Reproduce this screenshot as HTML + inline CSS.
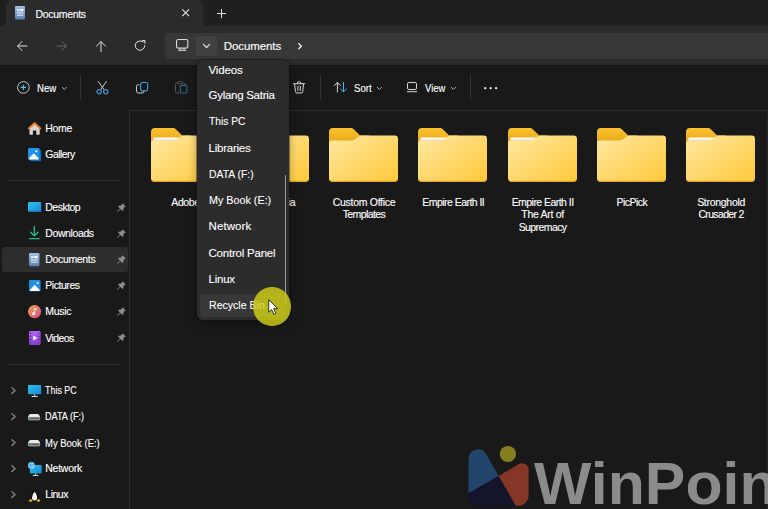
<!DOCTYPE html>
<html lang="en">
<head>
<meta charset="utf-8">
<title>Documents</title>
<style>
*{box-sizing:border-box;margin:0;padding:0}
html,body{width:768px;height:509px;overflow:hidden;background:#191919}
body{position:relative;font-family:"Liberation Sans",sans-serif;color:#fff;font-size:9.85px}
.abs{position:absolute}
svg{position:absolute;overflow:visible}
#titlebar{left:0;top:0;width:768px;height:27px;background:#1f1f1f}
#tab{left:6px;top:0;width:197px;height:27px;background:#2b2b2b;border-radius:6px 6px 0 0}
#navbar{left:0;top:26px;width:768px;height:39px;background:#2b2b2b}
#addr{left:165px;top:32.600px;width:620px;height:26px;background:#373737;border-radius:4px}
#chevbtn{left:196px;top:36px;width:20.5px;height:20px;background:#414141;border-radius:4px}
#toolbar{left:0;top:65px;width:768px;height:45.800px;background:#191919;border-top:1px solid #161616;border-bottom:1.400px solid #2d2d2d}
.t{position:absolute;white-space:nowrap;line-height:14px;color:#fff;font-size:10.500px;-webkit-text-stroke:.12px #fff}
.sep{position:absolute;width:1px;background:#333}
#sidebar{left:0;top:110px;width:130px;height:399px;background:#191919;border-right:1px solid #2b2b2b}
#sel{left:2px;top:246.5px;width:125.500px;height:25.500px;background:#2d2d2d;border-radius:3px}
#menu{left:197px;top:60px;width:92px;height:260px;background:#2c2c2c;border-radius:6px;box-shadow:0 0 0 1px rgba(16,16,16,.4),0 4px 10px rgba(0,0,0,.35)}
#menu .hl{left:3px;top:234px;width:85px;height:23px;background:#383838;border-radius:3px}
#menu .sb{left:87.500px;top:115px;width:1.500px;height:129px;background:#9c9c9c;border-radius:1px}
.mi{position:absolute;left:11.500px;font-size:11.500px;color:#fff;white-space:nowrap;line-height:14px;-webkit-text-stroke:.1px #fff}
.lbl{position:absolute;width:88px;text-align:center;font-size:10.500px;line-height:12.500px;color:#fff;-webkit-text-stroke:.12px #fff}
#wm{left:534.200px;top:451.150px;font-weight:bold;font-size:59.600px;line-height:66px;color:#8b8b8b;white-space:nowrap;transform-origin:0 0;transform:scaleX(1.02)}
#halo{left:252.600px;top:287.300px;width:38.800px;height:39.200px;border-radius:50%;background:rgba(209,207,22,.82)}
</style>
</head>
<body>
<svg width="0" height="0"><defs>
<linearGradient id="fb" x1="0" y1="0" x2="0" y2="1"><stop offset="0" stop-color="#fcc12e"/><stop offset=".45" stop-color="#e9ab1d"/></linearGradient>
<linearGradient id="ff" x1="0" y1="0" x2="1" y2="1"><stop offset="0" stop-color="#ffe9a4"/><stop offset="1" stop-color="#ffc838"/></linearGradient>
<linearGradient id="pg" x1="0" y1="0" x2="0" y2="1"><stop offset="0" stop-color="#ffffff"/><stop offset="1" stop-color="#e4e4e4"/></linearGradient>
<linearGradient id="cy" x1="0" y1="0" x2="1" y2="1"><stop offset="0" stop-color="#2fc3ea"/><stop offset="1" stop-color="#1887d6"/></linearGradient>
<linearGradient id="dc" x1="0" y1="0" x2="0" y2="1"><stop offset="0" stop-color="#a5c0e4"/><stop offset="1" stop-color="#587fb2"/></linearGradient>
<linearGradient id="mu" x1="0" y1="0" x2="1" y2="1"><stop offset="0" stop-color="#f4a94a"/><stop offset="1" stop-color="#d5488e"/></linearGradient>
<linearGradient id="vd" x1="0" y1="0" x2="0" y2="1"><stop offset="0" stop-color="#b062f0"/><stop offset="1" stop-color="#8a3fd6"/></linearGradient>
</defs></svg>

<div id="titlebar" class="abs"></div>
<div id="tab" class="abs"></div>
<!-- tab inverse corners -->
<svg style="left:0;top:21px" width="6" height="6" viewBox="0 0 6 6"><path d="M6 0 V6 H0 A6 6 0 0 0 6 0 Z" fill="#2b2b2b"/></svg>
<svg style="left:203px;top:21px" width="6" height="6" viewBox="0 0 6 6"><path d="M0 0 V6 H6 A6 6 0 0 1 0 0 Z" fill="#2b2b2b"/></svg>
<div id="navbar" class="abs"></div>
<div id="addr" class="abs"></div>
<div id="chevbtn" class="abs"></div>
<div id="toolbar" class="abs"></div>
<div id="sidebar" class="abs"></div>
<div id="sel" class="abs"></div>

<!-- tab content -->
<svg style="left:15.400px;top:6.200px" width="10" height="13.400" viewBox="0 0 10 13.400"><rect width="10" height="13.400" rx="1" fill="url(#dc)"/><rect x="2" y="3" width="2.600" height="2.200" fill="#dfe9f6"/><rect x="5.400" y="3" width="2.800" height="2.200" fill="#fff"/><rect x="2" y="6.500" width="6.200" height="1" fill="#e6eef9"/><rect x="2" y="8.700" width="6.200" height="1" fill="#e6eef9"/></svg>
<div class="t" style="left:35.500px;top:6.500px;letter-spacing:-0.322px">Documents</div>
<svg style="left:182px;top:9.400px" width="7.400" height="7.400" viewBox="0 0 7.400 7.400"><path d="M.3 .3 L7.100 7.100 M7.100 .3 L.3 7.100" stroke="#e6e6e6" stroke-width="1.100" fill="none"/></svg>
<svg style="left:217px;top:9px" width="9" height="9" viewBox="0 0 9 9"><path d="M4.500 0 V9 M0 4.500 H9" stroke="#e0e0e0" stroke-width="1" fill="none"/></svg>

<!-- nav icons -->
<svg style="left:17px;top:40.500px" width="10" height="10" viewBox="0 0 10 10"><path d="M10 5 H.8 M5 .6 L.6 5 L5 9.400" stroke="#e0e0e0" stroke-width="1" fill="none" stroke-linecap="round" stroke-linejoin="round"/></svg>
<svg style="left:56.500px;top:40.500px" width="10" height="10" viewBox="0 0 10 10"><path d="M0 5 H9.200 M5 .6 L9.400 5 L5 9.400" stroke="#6a6a6a" stroke-width="1" fill="none" stroke-linecap="round" stroke-linejoin="round"/></svg>
<svg style="left:95.500px;top:40.800px" width="10" height="10.500" viewBox="0 0 10 10.500"><path d="M5 10.500 V.8 M.6 5 L5 .6 L9.400 5" stroke="#e0e0e0" stroke-width="1" fill="none" stroke-linecap="round" stroke-linejoin="round"/></svg>
<svg style="left:134.800px;top:40.200px" width="10.500" height="10.500" viewBox="0 0 10.500 10.500"><path d="M9.680 5.600 A4.700 4.700 0 1 1 7.900 1.900" stroke="#e0e0e0" stroke-width="1" fill="none" stroke-linecap="round"/><path d="M7.300 .6 H10 V3.300" stroke="#e0e0e0" stroke-width="1" fill="none" stroke-linecap="round" stroke-linejoin="round"/><path d="M8.300 1.100 H9.600 V2.400 Z" fill="#e0e0e0"/></svg>
<!-- monitor -->
<svg style="left:176px;top:39.300px" width="12.400" height="12" viewBox="0 0 12.400 12"><rect x=".55" y=".55" width="11.300" height="8.600" rx="1.600" stroke="#d8d8d8" stroke-width="1.100" fill="none"/><path d="M2.200 11.300 H10.200" stroke="#d8d8d8" stroke-width="1.100"/><path d="M4.300 9.300 V11 M8.100 9.300 V11" stroke="#d8d8d8" stroke-width=".9"/></svg>
<svg style="left:202.800px;top:44px" width="7" height="4" viewBox="0 0 7 4"><path d="M.4 .4 L3.500 3.500 L6.600 .4" stroke="#e8e8e8" stroke-width="1.100" fill="none" stroke-linecap="round" stroke-linejoin="round"/></svg>
<div class="t" style="left:223.700px;top:38.500px;font-size:11.500px;letter-spacing:-.08px">Documents</div>
<svg style="left:297.900px;top:42.800px" width="4.200" height="6.400" viewBox="0 0 4.200 6.400"><path d="M.7 .6 L3.400 3.200 L.7 5.800" stroke="#ececec" stroke-width="1.350" fill="none" stroke-linecap="round" stroke-linejoin="round"/></svg>

<!-- toolbar -->
<svg style="left:16.900px;top:80.800px" width="12.800" height="12.800" viewBox="0 0 12.800 12.800"><circle cx="6.400" cy="6.400" r="5.850" stroke="#c8c8c8" stroke-width="1" fill="none"/><path d="M6.400 4.100 V8.700 M4.100 6.400 H8.700" stroke="#4cc2ff" stroke-width="1.100" stroke-linecap="round"/></svg>
<div class="t" style="left:36.800px;top:81px;transform-origin:0 0;transform:scaleX(0.914)">New</div>
<svg style="left:61.700px;top:86.500px" width="4.800" height="2.800" viewBox="0 0 4.800 2.800"><path d="M.3 .3 L2.400 2.400 L4.500 .3" stroke="#bdbdbd" stroke-width=".9" fill="none" stroke-linecap="round" stroke-linejoin="round"/></svg>
<div class="sep" style="left:80px;top:74.500px;height:25.500px"></div>
<!-- scissors -->
<svg style="left:96px;top:80.800px" width="12" height="13.400" viewBox="0 0 12 13.400"><path d="M2.300 .5 L7.950 8.500 M10.400 .5 L4.750 8.500" stroke="#d0d0d0" stroke-width="1" fill="none" stroke-linecap="round"/><circle cx="3.100" cy="10.700" r="2.150" stroke="#3d9fd8" stroke-width="1.150" fill="none"/><circle cx="9.800" cy="10.700" r="2.150" stroke="#3d9fd8" stroke-width="1.150" fill="none"/></svg>
<!-- copy -->
<svg style="left:135.600px;top:81.700px" width="12.400" height="11.500" viewBox="0 0 12.400 11.500"><path d="M3.300 2.800 H2.300 a1.800 1.800 0 0 0 -1.800 1.800 V9.200 a1.800 1.800 0 0 0 1.800 1.800 H6.200 a1.800 1.800 0 0 0 1.800 -1.800" stroke="#cfcfcf" stroke-width="1" fill="none"/><rect x="4.700" y=".5" width="7" height="8.400" rx="1.800" stroke="#3fa8e0" stroke-width="1.100" fill="none"/></svg>
<!-- paste (disabled) -->
<svg style="left:174.700px;top:81.300px" width="12.400" height="12.500" viewBox="0 0 12.400 12.500"><path d="M3 1.800 H2 a1.500 1.500 0 0 0 -1.500 1.500 V10.500 a1.500 1.500 0 0 0 1.500 1.500 H4.500 M7.500 1.800 H8.500 a1.500 1.500 0 0 1 1.500 1.500 V4" stroke="#555" stroke-width="1" fill="none"/><rect x="3" y=".5" width="4.500" height="2.400" rx="1" stroke="#555" stroke-width=".9" fill="none"/><rect x="5.400" y="4.400" width="6.500" height="7.600" rx="1.300" stroke="#2a678a" stroke-width="1.100" fill="none"/></svg>
<!-- trash -->
<svg style="left:292.800px;top:81.300px" width="12.200" height="12.500" viewBox="0 0 12.200 12.500"><path d="M.4 2.700 H11.800 M4.200 2.500 a1.900 1.900 0 0 1 3.800 0" stroke="#d8d8d8" stroke-width="1" fill="none" stroke-linecap="round"/><path d="M1.600 2.900 L2.500 10.600 a1.500 1.500 0 0 0 1.500 1.400 H8.200 a1.500 1.500 0 0 0 1.500 -1.400 L10.600 2.900" stroke="#d8d8d8" stroke-width="1" fill="none"/><path d="M4.900 5.200 V9.400 M7.300 5.200 V9.400" stroke="#d8d8d8" stroke-width="1" stroke-linecap="round"/></svg>
<div class="sep" style="left:320px;top:74.500px;height:25.500px"></div>
<!-- sort -->
<svg style="left:334px;top:81.900px" width="13" height="10.400" viewBox="0 0 13 10.400"><path d="M3.400 10 V.7 M.5 3.500 L3.400 .5 L6.300 3.500" stroke="#d8d8d8" stroke-width="1" fill="none" stroke-linecap="round" stroke-linejoin="round"/><path d="M9.500 .4 V9.700 M6.600 6.900 L9.500 9.900 L12.400 6.900" stroke="#4cb8f0" stroke-width="1" fill="none" stroke-linecap="round" stroke-linejoin="round"/></svg>
<div class="t" style="left:353.500px;top:81px;transform-origin:0 0;transform:scaleX(0.917)">Sort</div>
<svg style="left:376.900px;top:86.500px" width="4.800" height="2.800" viewBox="0 0 4.800 2.800"><path d="M.3 .3 L2.400 2.400 L4.500 .3" stroke="#bdbdbd" stroke-width=".9" fill="none" stroke-linecap="round" stroke-linejoin="round"/></svg>
<!-- view -->
<svg style="left:406.900px;top:82.400px" width="10" height="10.400" viewBox="0 0 10 10.400"><rect x=".5" y=".5" width="9" height="7" rx="1.300" stroke="#d8d8d8" stroke-width="1" fill="none"/><path d="M.3 9.700 H9.700" stroke="#d8d8d8" stroke-width="1" stroke-linecap="round"/></svg>
<div class="t" style="left:425px;top:81px;transform-origin:0 0;transform:scaleX(0.899)">View</div>
<svg style="left:451.200px;top:86.500px" width="4.800" height="2.800" viewBox="0 0 4.800 2.800"><path d="M.3 .3 L2.400 2.400 L4.500 .3" stroke="#bdbdbd" stroke-width=".9" fill="none" stroke-linecap="round" stroke-linejoin="round"/></svg>
<div class="sep" style="left:470px;top:74.500px;height:25.500px"></div>
<svg style="left:483.700px;top:87.100px" width="13.400" height="2.400" viewBox="0 0 13.400 2.400"><circle cx="1.200" cy="1.200" r="1.150" fill="#f0f0f0"/><circle cx="6.700" cy="1.200" r="1.150" fill="#f0f0f0"/><circle cx="12.200" cy="1.200" r="1.150" fill="#f0f0f0"/></svg>

<!-- sidebar icons + text -->
<!-- home -->
<svg style="left:27.800px;top:122.300px" width="13.200" height="12.800" viewBox="0 0 13.200 12.800"><path d="M1.500 6.400 L6.600 1.800 L11.700 6.400 V11.900 a.8 .8 0 0 1 -.8 .8 H8.300 V8.600 H4.900 V12.700 H2.300 a.8 .8 0 0 1 -.8 -.8 Z" fill="#d6d6d6"/><path d="M.9 6.500 L6.600 1.200 L12.300 6.500" stroke="#f0862c" stroke-width="1.900" fill="none" stroke-linecap="round" stroke-linejoin="round"/></svg>
<div class="t" style="left:45.300px;top:120.5px;letter-spacing:-0.302px">Home</div>
<!-- gallery -->
<svg style="left:28px;top:148px" width="13.200" height="13.200" viewBox="0 0 13.200 13.200"><rect x="1.800" y="1.800" width="11.400" height="11.400" rx="1.500" fill="#1565b8"/><rect width="11.600" height="11.600" rx="1.500" fill="#2094e6"/><path d="M.6 10.800 L5 5.900 a1 1 0 0 1 1.400 0 L11 10.800 a.9 .9 0 0 1 -.7 .8 H1.300 a.9 .9 0 0 1 -.7 -.8 Z" fill="#fff"/><circle cx="8.300" cy="3.300" r="1" fill="#fff"/></svg>
<div class="t" style="left:45.300px;top:146.5px;letter-spacing:-0.551px">Gallery</div>
<div class="sep" style="left:8px;top:180px;width:113px;height:1px;background:#2f2f2f"></div>
<!-- desktop -->
<svg style="left:27.800px;top:202px" width="13.200" height="10" viewBox="0 0 13.200 10"><rect width="13.200" height="10" rx="1.400" fill="url(#cy)"/><rect x="0" y="8.800" width="13.200" height="1.200" rx=".6" fill="#1672c0"/></svg>
<div class="t" style="left:45.300px;top:199.5px;letter-spacing:-0.517px">Desktop</div>
<!-- downloads -->
<svg style="left:29px;top:226.300px" width="10.600" height="13.400" viewBox="0 0 10.600 13.400"><path d="M5.300 .5 V9.600 M1.600 6.200 L5.300 9.900 L9 6.200 M.6 12.700 H10" stroke="#22c08e" stroke-width="1.300" fill="none" stroke-linecap="round" stroke-linejoin="round"/></svg>
<div class="t" style="left:45.300px;top:225.5px;letter-spacing:-0.394px">Downloads</div>
<!-- documents -->
<svg style="left:28.800px;top:252.800px" width="10.500" height="13.200" viewBox="0 0 10.500 13.200"><rect width="10.500" height="13.200" rx="1.100" fill="url(#dc)"/><rect x="2" y="3" width="2.700" height="2.200" fill="#dfe9f6"/><rect x="5.500" y="3" width="3" height="2.200" fill="#fff"/><rect x="2" y="6.500" width="6.500" height="1" fill="#e6eef9"/><rect x="2" y="8.700" width="6.500" height="1" fill="#e6eef9"/></svg>
<div class="t" style="left:45.300px;top:251.5px;letter-spacing:-0.345px">Documents</div>
<!-- pictures -->
<svg style="left:28.700px;top:280px" width="11.600" height="11.300" viewBox="0 0 11.600 11.300"><rect width="11.600" height="11.300" rx="1.400" fill="#1f8fe2"/><path d="M.7 10.200 L5 5.600 a1 1 0 0 1 1.500 0 L10.900 10.200 a.9 .9 0 0 1 -.7 .7 H1.400 a.9 .9 0 0 1 -.7 -.7 Z" fill="#fff"/><circle cx="8.600" cy="2.900" r="1" fill="#fff"/></svg>
<div class="t" style="left:45.300px;top:277.5px;letter-spacing:-0.453px">Pictures</div>
<!-- music -->
<svg style="left:27.800px;top:305.400px" width="13.200" height="13.200" viewBox="0 0 13.200 13.200"><circle cx="6.600" cy="6.600" r="6.600" fill="url(#mu)"/><path d="M6.300 3 L8.800 3.700 V5 L7.100 4.600 V8.800 a1.500 1.400 0 1 1 -.8 -1.250 Z" fill="#fff"/></svg>
<div class="t" style="left:45.300px;top:303.5px;letter-spacing:-0.284px">Music</div>
<!-- videos -->
<svg style="left:28.700px;top:331px" width="11.600" height="14" viewBox="0 0 11.600 14"><rect width="11.600" height="14" rx="1.400" fill="url(#vd)"/><g fill="#5a2496"><rect x="1" y="1.600" width="1.200" height="1.300"/><rect x="1" y="4.800" width="1.200" height="1.300"/><rect x="1" y="8" width="1.200" height="1.300"/><rect x="1" y="11.200" width="1.200" height="1.300"/><rect x="9.400" y="1.600" width="1.200" height="1.300"/><rect x="9.400" y="4.800" width="1.200" height="1.300"/><rect x="9.400" y="8" width="1.200" height="1.300"/><rect x="9.400" y="11.200" width="1.200" height="1.300"/></g><path d="M4.200 4.500 L8.300 7 L4.200 9.500 Z" fill="#fff"/></svg>
<div class="t" style="left:45.300px;top:330.5px;letter-spacing:-0.602px">Videos</div>
<!-- pins -->
<svg style="left:116.600px;top:202.800px" width="9" height="9" viewBox="0 0 9 9"><path d="M5.600 .3 L8.700 3.400 L7.700 3.900 L6.500 5.100 L6.300 7.200 L5.500 8 L3.500 6 L.8 8.700 L.3 8.700 L.3 8.200 L3 5.500 L1 3.500 L1.800 2.700 L3.900 2.500 L5.100 1.300 Z" fill="#8d8d8d"/></svg>
<svg style="left:116.600px;top:228.800px" width="9" height="9" viewBox="0 0 9 9"><path d="M5.600 .3 L8.700 3.400 L7.700 3.900 L6.500 5.100 L6.300 7.200 L5.500 8 L3.500 6 L.8 8.700 L.3 8.700 L.3 8.200 L3 5.500 L1 3.500 L1.800 2.700 L3.900 2.500 L5.100 1.300 Z" fill="#8d8d8d"/></svg>
<svg style="left:116.600px;top:254.800px" width="9" height="9" viewBox="0 0 9 9"><path d="M5.600 .3 L8.700 3.400 L7.700 3.900 L6.500 5.100 L6.300 7.200 L5.500 8 L3.500 6 L.8 8.700 L.3 8.700 L.3 8.200 L3 5.500 L1 3.500 L1.800 2.700 L3.900 2.500 L5.100 1.300 Z" fill="#8d8d8d"/></svg>
<svg style="left:116.600px;top:280.800px" width="9" height="9" viewBox="0 0 9 9"><path d="M5.600 .3 L8.700 3.400 L7.700 3.900 L6.500 5.100 L6.300 7.200 L5.500 8 L3.500 6 L.8 8.700 L.3 8.700 L.3 8.200 L3 5.500 L1 3.500 L1.800 2.700 L3.900 2.500 L5.100 1.300 Z" fill="#8d8d8d"/></svg>
<svg style="left:116.600px;top:306.800px" width="9" height="9" viewBox="0 0 9 9"><path d="M5.600 .3 L8.700 3.400 L7.700 3.900 L6.500 5.100 L6.300 7.200 L5.500 8 L3.500 6 L.8 8.700 L.3 8.700 L.3 8.200 L3 5.500 L1 3.500 L1.800 2.700 L3.900 2.500 L5.100 1.300 Z" fill="#8d8d8d"/></svg>
<svg style="left:116.600px;top:332.800px" width="9" height="9" viewBox="0 0 9 9"><path d="M5.600 .3 L8.700 3.400 L7.700 3.900 L6.500 5.100 L6.300 7.200 L5.500 8 L3.500 6 L.8 8.700 L.3 8.700 L.3 8.200 L3 5.500 L1 3.500 L1.800 2.700 L3.900 2.500 L5.100 1.300 Z" fill="#8d8d8d"/></svg>
<div class="sep" style="left:8px;top:364px;width:113px;height:1px;background:#2f2f2f"></div>
<!-- expanders -->
<svg style="left:10.900px;top:387.0px" width="5" height="7.200" viewBox="0 0 5 7.200"><path d="M.9 .8 L4.100 3.600 L.9 6.400" stroke="#7c7c7c" stroke-width="1.500" fill="none" stroke-linecap="round" stroke-linejoin="round"/></svg>
<svg style="left:10.900px;top:413.0px" width="5" height="7.200" viewBox="0 0 5 7.200"><path d="M.9 .8 L4.100 3.600 L.9 6.400" stroke="#7c7c7c" stroke-width="1.500" fill="none" stroke-linecap="round" stroke-linejoin="round"/></svg>
<svg style="left:10.900px;top:439.0px" width="5" height="7.200" viewBox="0 0 5 7.200"><path d="M.9 .8 L4.100 3.600 L.9 6.400" stroke="#7c7c7c" stroke-width="1.500" fill="none" stroke-linecap="round" stroke-linejoin="round"/></svg>
<svg style="left:10.900px;top:465.0px" width="5" height="7.200" viewBox="0 0 5 7.200"><path d="M.9 .8 L4.100 3.600 L.9 6.400" stroke="#7c7c7c" stroke-width="1.500" fill="none" stroke-linecap="round" stroke-linejoin="round"/></svg>
<svg style="left:10.900px;top:491.0px" width="5" height="7.200" viewBox="0 0 5 7.200"><path d="M.9 .8 L4.100 3.600 L.9 6.400" stroke="#7c7c7c" stroke-width="1.500" fill="none" stroke-linecap="round" stroke-linejoin="round"/></svg>
<!-- this pc -->
<svg style="left:27.800px;top:384.700px" width="13.200" height="12.200" viewBox="0 0 13.200 12.200"><rect width="13.200" height="9.200" rx="1" fill="url(#cy)"/><path d="M6.600 9.200 V11.300" stroke="#c4c4c4" stroke-width="1.100"/><rect x="3.400" y="11" width="6.400" height="1" rx=".5" fill="#d8d8d8"/></svg>
<div class="t" style="left:45.300px;top:382.5px;transform-origin:0 0;transform:scaleX(0.849)">This PC</div>
<!-- drives -->
<svg style="left:28.300px;top:414px" width="12.100" height="6.100" viewBox="0 0 12.100 6.100"><path d="M2.600 0 H9.500 C10.600 0 11.600 1.400 12.100 3 H0 C.5 1.400 1.500 0 2.600 0 Z" fill="#ececec"/><rect x=".35" y="3" width="11.400" height="2.900" rx=".8" fill="#5e5e5e" stroke="#d4d4d4" stroke-width=".7"/><rect x="2.400" y="3.900" width="1.200" height="1.100" fill="#35c653"/></svg>
<div class="t" style="left:45.300px;top:408.5px;transform-origin:0 0;transform:scaleX(0.867)">DATA (F:)</div>
<svg style="left:28.300px;top:440px" width="12.100" height="6.100" viewBox="0 0 12.100 6.100"><path d="M2.600 0 H9.500 C10.600 0 11.600 1.400 12.100 3 H0 C.5 1.400 1.500 0 2.600 0 Z" fill="#ececec"/><rect x=".35" y="3" width="11.400" height="2.900" rx=".8" fill="#5e5e5e" stroke="#d4d4d4" stroke-width=".7"/><rect x="2.400" y="3.900" width="1.200" height="1.100" fill="#35c653"/></svg>
<div class="t" style="left:45.300px;top:435.5px;transform-origin:0 0;transform:scaleX(0.902)">My Book (E:)</div>
<!-- network -->
<svg style="left:27.600px;top:462px" width="13.600" height="14.200" viewBox="0 0 13.600 14.200"><rect x="1.800" y="3" width="11.800" height="8.400" rx="1" fill="url(#cy)"/><rect x="7" y="11.400" width="1.200" height="1.800" fill="#b8b8b8"/><rect x="4.600" y="13" width="6" height="1" rx=".5" fill="#d0d0d0"/><circle cx="3.400" cy="3.400" r="3.400" fill="#7fd0f4"/><path d="M.4 2.600 C2 3.600 4.800 3.600 6.400 2.200 M3.400 0 C1.800 2 1.800 4.800 3.400 6.800" stroke="#2a8cd0" stroke-width=".7" fill="none"/></svg>
<div class="t" style="left:45.300px;top:460.5px;letter-spacing:-0.258px">Network</div>
<!-- linux -->
<svg style="left:28.600px;top:488.500px" width="11.200" height="13" viewBox="0 0 11.200 13"><path d="M5.600 0 C7.200 0 7.900 1.300 7.900 3 C7.900 5 10 7.500 10 10 C10 12 8 12.600 5.600 12.600 C3.200 12.600 1.200 12 1.200 10 C1.200 7.500 3.300 5 3.300 3 C3.300 1.300 4 0 5.600 0 Z" fill="#111"/><path d="M5.600 3.600 C6.800 3.600 7.400 5.600 8 8 C8.500 10.200 7.500 11.600 5.600 11.600 C3.700 11.600 2.700 10.200 3.200 8 C3.800 5.600 4.400 3.600 5.600 3.600 Z" fill="#fff"/><path d="M4.700 2.900 L5.600 2.500 L6.500 2.900 L5.600 3.600 Z" fill="#f0b21c"/><path d="M0 11.600 C0 10.400 1.600 9.800 2.600 10.400 L3.600 12 C3 13 0 13.200 0 11.600 Z M11.200 11.600 C11.200 10.400 9.600 9.800 8.600 10.400 L7.600 12 C8.200 13 11.200 13.200 11.200 11.600 Z" fill="#eab01e"/></svg>
<div class="t" style="left:45.300px;top:486.5px;letter-spacing:-0.48px">Linux</div>


<svg class="abs" style="left:150.5px;top:127.600px" width="69" height="53.800" viewBox="0 0 69 54.5" preserveAspectRatio="none">
<path d="M0 4 a4 4 0 0 1 4 -4 H21.5 c1.8 0 2.8 .6 3.8 1.8 L31.2 7.6 H40 V30 H0 Z" fill="url(#fb)"/>
<path d="M2.2 11.2 a1.6 1.6 0 0 1 1.6 -1.6 H31 L26 12.2 C24.3 12.8 23.6 13 22.6 13 H2.2 Z" fill="url(#pg)"/><path d="M0 15.2 a2.6 2.6 0 0 1 2.6 -2.6 H22.8 c1.4 0 2.3 -.3 3.3 -1.100 L30 8.300 c.9 -.6 1.500 -.8 2.600 -.8 H65.6 a3.400 3.400 0 0 1 3.400 3.400 V51 a3.400 3.400 0 0 1 -3.400 3.400 H3.400 A3.400 3.400 0 0 1 0 51 Z" fill="url(#ff)"/>
<path d="M0 50.200 V51 a3.400 3.400 0 0 0 3.400 3.400 H65.6 a3.400 3.400 0 0 0 3.400 -3.400 V50.200 a3.400 3.400 0 0 1 -3.400 3.300 H3.400 A3.400 3.400 0 0 1 0 50.200 Z" fill="#e3a724"/>
</svg><svg class="abs" style="left:239.8px;top:127.600px" width="69" height="53.800" viewBox="0 0 69 54.5" preserveAspectRatio="none">
<path d="M0 4 a4 4 0 0 1 4 -4 H21.5 c1.8 0 2.8 .6 3.8 1.8 L31.2 7.6 H40 V30 H0 Z" fill="url(#fb)"/>
<path d="M2.2 11.2 a1.6 1.6 0 0 1 1.6 -1.6 H31 L26 12.2 C24.3 12.8 23.6 13 22.6 13 H2.2 Z" fill="url(#pg)"/><path d="M0 15.2 a2.6 2.6 0 0 1 2.6 -2.6 H22.8 c1.4 0 2.3 -.3 3.3 -1.100 L30 8.300 c.9 -.6 1.500 -.8 2.600 -.8 H65.6 a3.400 3.400 0 0 1 3.400 3.400 V51 a3.400 3.400 0 0 1 -3.400 3.400 H3.400 A3.400 3.400 0 0 1 0 51 Z" fill="url(#ff)"/>
<path d="M0 50.200 V51 a3.400 3.400 0 0 0 3.400 3.400 H65.6 a3.400 3.400 0 0 0 3.400 -3.400 V50.200 a3.400 3.400 0 0 1 -3.400 3.300 H3.400 A3.400 3.400 0 0 1 0 50.200 Z" fill="#e3a724"/>
</svg><svg class="abs" style="left:329px;top:127.600px" width="69" height="53.800" viewBox="0 0 69 54.5" preserveAspectRatio="none">
<path d="M0 4 a4 4 0 0 1 4 -4 H21.5 c1.8 0 2.8 .6 3.8 1.8 L31.2 7.6 H40 V30 H0 Z" fill="url(#fb)"/>
<path d="M0 15.2 a2.6 2.6 0 0 1 2.6 -2.6 H22.8 c1.4 0 2.3 -.3 3.3 -1.100 L30 8.300 c.9 -.6 1.500 -.8 2.600 -.8 H65.6 a3.400 3.400 0 0 1 3.400 3.400 V51 a3.400 3.400 0 0 1 -3.400 3.400 H3.400 A3.400 3.400 0 0 1 0 51 Z" fill="url(#ff)"/>
<path d="M0 50.200 V51 a3.400 3.400 0 0 0 3.400 3.400 H65.6 a3.400 3.400 0 0 0 3.400 -3.400 V50.200 a3.400 3.400 0 0 1 -3.400 3.300 H3.400 A3.400 3.400 0 0 1 0 50.200 Z" fill="#e3a724"/>
</svg><svg class="abs" style="left:418.3px;top:127.600px" width="69" height="53.800" viewBox="0 0 69 54.5" preserveAspectRatio="none">
<path d="M0 4 a4 4 0 0 1 4 -4 H21.5 c1.8 0 2.8 .6 3.8 1.8 L31.2 7.6 H40 V30 H0 Z" fill="url(#fb)"/>
<path d="M2.2 11.2 a1.6 1.6 0 0 1 1.6 -1.6 H31 L26 12.2 C24.3 12.8 23.6 13 22.6 13 H2.2 Z" fill="url(#pg)"/><path d="M0 15.2 a2.6 2.6 0 0 1 2.6 -2.6 H22.8 c1.4 0 2.3 -.3 3.3 -1.100 L30 8.300 c.9 -.6 1.500 -.8 2.600 -.8 H65.6 a3.400 3.400 0 0 1 3.400 3.400 V51 a3.400 3.400 0 0 1 -3.400 3.400 H3.400 A3.400 3.400 0 0 1 0 51 Z" fill="url(#ff)"/>
<path d="M0 50.200 V51 a3.400 3.400 0 0 0 3.400 3.400 H65.6 a3.400 3.400 0 0 0 3.400 -3.400 V50.200 a3.400 3.400 0 0 1 -3.400 3.300 H3.400 A3.400 3.400 0 0 1 0 50.200 Z" fill="#e3a724"/>
</svg><svg class="abs" style="left:507.6px;top:127.600px" width="69" height="53.800" viewBox="0 0 69 54.5" preserveAspectRatio="none">
<path d="M0 4 a4 4 0 0 1 4 -4 H21.5 c1.8 0 2.8 .6 3.8 1.8 L31.2 7.6 H40 V30 H0 Z" fill="url(#fb)"/>
<path d="M2.2 11.2 a1.6 1.6 0 0 1 1.6 -1.6 H31 L26 12.2 C24.3 12.8 23.6 13 22.6 13 H2.2 Z" fill="url(#pg)"/><path d="M0 15.2 a2.6 2.6 0 0 1 2.6 -2.6 H22.8 c1.4 0 2.3 -.3 3.3 -1.100 L30 8.300 c.9 -.6 1.500 -.8 2.600 -.8 H65.6 a3.400 3.400 0 0 1 3.400 3.400 V51 a3.400 3.400 0 0 1 -3.400 3.400 H3.400 A3.400 3.400 0 0 1 0 51 Z" fill="url(#ff)"/>
<path d="M0 50.200 V51 a3.400 3.400 0 0 0 3.400 3.400 H65.6 a3.400 3.400 0 0 0 3.400 -3.400 V50.200 a3.400 3.400 0 0 1 -3.400 3.300 H3.400 A3.400 3.400 0 0 1 0 50.200 Z" fill="#e3a724"/>
</svg><svg class="abs" style="left:596.8px;top:127.600px" width="69" height="53.800" viewBox="0 0 69 54.5" preserveAspectRatio="none">
<path d="M0 4 a4 4 0 0 1 4 -4 H21.5 c1.8 0 2.8 .6 3.8 1.8 L31.2 7.6 H40 V30 H0 Z" fill="url(#fb)"/>
<path d="M0 15.2 a2.6 2.6 0 0 1 2.6 -2.6 H22.8 c1.4 0 2.3 -.3 3.3 -1.100 L30 8.300 c.9 -.6 1.500 -.8 2.600 -.8 H65.6 a3.400 3.400 0 0 1 3.400 3.400 V51 a3.400 3.400 0 0 1 -3.400 3.400 H3.400 A3.400 3.400 0 0 1 0 51 Z" fill="url(#ff)"/>
<path d="M0 50.200 V51 a3.400 3.400 0 0 0 3.400 3.400 H65.6 a3.400 3.400 0 0 0 3.400 -3.400 V50.200 a3.400 3.400 0 0 1 -3.400 3.300 H3.400 A3.400 3.400 0 0 1 0 50.200 Z" fill="#e3a724"/>
</svg><svg class="abs" style="left:686.1px;top:127.600px" width="69" height="53.800" viewBox="0 0 69 54.5" preserveAspectRatio="none">
<path d="M0 4 a4 4 0 0 1 4 -4 H21.5 c1.8 0 2.8 .6 3.8 1.8 L31.2 7.6 H40 V30 H0 Z" fill="url(#fb)"/>
<path d="M2.2 11.2 a1.6 1.6 0 0 1 1.6 -1.6 H31 L26 12.2 C24.3 12.8 23.6 13 22.6 13 H2.2 Z" fill="url(#pg)"/><path d="M0 15.2 a2.6 2.6 0 0 1 2.6 -2.6 H22.8 c1.4 0 2.3 -.3 3.3 -1.100 L30 8.300 c.9 -.6 1.500 -.8 2.600 -.8 H65.6 a3.400 3.400 0 0 1 3.400 3.400 V51 a3.400 3.400 0 0 1 -3.400 3.400 H3.400 A3.400 3.400 0 0 1 0 51 Z" fill="url(#ff)"/>
<path d="M0 50.200 V51 a3.400 3.400 0 0 0 3.400 3.400 H65.6 a3.400 3.400 0 0 0 3.400 -3.400 V50.200 a3.400 3.400 0 0 1 -3.400 3.300 H3.400 A3.400 3.400 0 0 1 0 50.200 Z" fill="#e3a724"/>
</svg>

<!-- folder labels -->
<div class="lbl" style="left:141.5px;top:195.500px"><span style="letter-spacing:-0.392px">Adobe</span></div>
<div class="lbl" style="left:230.8px;top:195.500px"><span style="letter-spacing:-0.443px">Camtasia</span></div>
<div class="lbl" style="left:320.0px;top:195.500px"><span style="letter-spacing:-0.286px">Custom Office</span><br><span style="letter-spacing:-0.584px">Templates</span></div>
<div class="lbl" style="left:409.3px;top:195.500px"><span style="letter-spacing:-0.541px">Empire Earth II</span></div>
<div class="lbl" style="left:498.6px;top:195.500px"><span style="letter-spacing:-0.541px">Empire Earth II</span><br><span style="letter-spacing:-0.292px">The Art of</span><br><span style="letter-spacing:-0.589px">Supremacy</span></div>
<div class="lbl" style="left:587.8px;top:195.500px"><span style="letter-spacing:-0.532px">PicPick</span></div>
<div class="lbl" style="left:677.1px;top:195.500px"><span style="letter-spacing:-0.288px">Stronghold</span><br><span style="letter-spacing:-0.664px">Crusader 2</span></div>

<div class="abs" style="left:767px;top:114px;width:1px;height:395px;background:#262626"></div>
<!-- watermark -->
<svg style="left:468px;top:445px" width="62" height="64" viewBox="468 445 62 64">
<path d="M468.500 459 a9.500 9.500 0 0 1 17.600 -5 L498.700 475.900 L468.500 493.600 Z" fill="#22456b"/>
<path d="M468.500 493.600 L498.700 475.900 L515.800 505.800 H476.500 a8 8 0 0 1 -8 -8 Z" fill="#14142b"/>
<path d="M498.700 475.900 L519 464 a6.400 6.400 0 0 1 9.600 5.500 V495 a10.800 10.800 0 0 1 -10.800 10.800 H515.800 Z" fill="#853626"/>
<circle cx="507.900" cy="454" r="8.100" fill="#84801f"/>
</svg>
<div id="wm" class="abs">WinPoin</div>


<!-- dropdown -->
<div id="menu" class="abs">
  <div class="hl abs"></div>
  <div class="sb abs"></div>
  <div class="mi" style="top:3px;letter-spacing:-0.125px">Videos</div>
  <div class="mi" style="top:28px;letter-spacing:-0.275px">Gylang Satria</div>
  <div class="mi" style="top:54px;transform-origin:0 0;transform:scaleX(0.888)">This PC</div>
  <div class="mi" style="top:81px;letter-spacing:-0.233px">Libraries</div>
  <div class="mi" style="top:107px;transform-origin:0 0;transform:scaleX(0.903)">DATA (F:)</div>
  <div class="mi" style="top:133px;transform-origin:0 0;transform:scaleX(0.936)">My Book (E:)</div>
  <div class="mi" style="top:159px;letter-spacing:0.089px">Network</div>
  <div class="mi" style="top:186px;letter-spacing:-0.214px">Control Panel</div>
  <div class="mi" style="top:212px;letter-spacing:-0.218px">Linux</div>
  <div class="mi" style="top:238px;transform-origin:0 0;transform:scaleX(0.919)">Recycle Bin</div>
</div>
<div id="halo" class="abs"></div>
<svg style="left:268.200px;top:299.300px" width="11.300" height="16.400" viewBox="0 0 11 16"><path d="M.7 .8 V13 L3.500 10.300 L5.600 15 L7.600 14.100 L5.500 9.500 H9.500 Z" fill="#fff" stroke="#222" stroke-width=".9" stroke-linejoin="round"/></svg>

</body>
</html>
